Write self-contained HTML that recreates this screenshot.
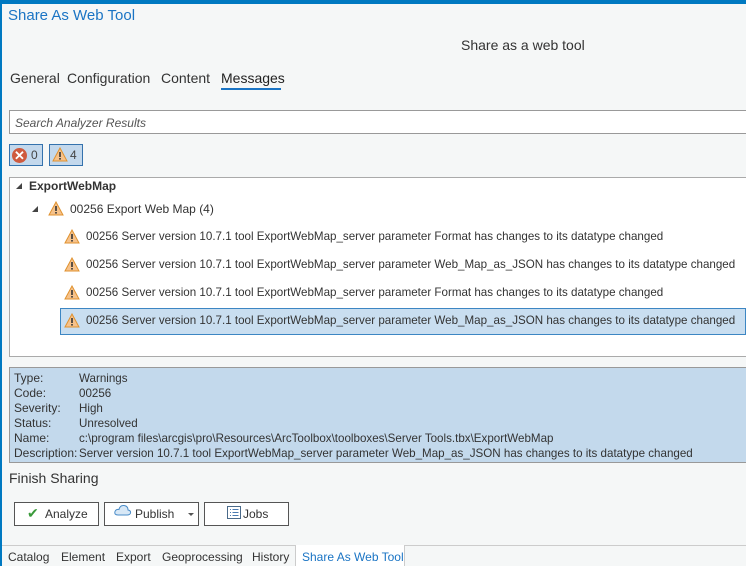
<!DOCTYPE html>
<html><head><style>
*{margin:0;padding:0;box-sizing:border-box}
body{width:746px;height:566px;background:#f5f7f7;font-family:"Liberation Sans",sans-serif;color:#333;position:relative;overflow:hidden;font-size:12px}
.a{position:absolute;white-space:nowrap}
.m{font-size:11.6px}
</style></head><body>
<div class="a" style="left:0;top:0;width:746px;height:4px;background:#0079c1"></div>
<div class="a" style="left:0;top:0;width:2px;height:566px;background:#0079c1"></div>
<div class="a" style="left:8px;top:7px;font-size:15px;color:#1a74c4">Share As Web Tool</div>
<div class="a" style="left:461px;top:37px;font-size:14px;color:#333">Share as a web tool</div>
<div class="a" style="left:10px;top:70px;font-size:14px;color:#333">General</div>
<div class="a" style="left:67px;top:70px;font-size:14px;color:#333">Configuration</div>
<div class="a" style="left:161px;top:70px;font-size:14px;color:#333">Content</div>
<div class="a" style="left:221px;top:70px;font-size:14px;color:#222">Messages</div>
<div class="a" style="left:221px;top:88px;width:60px;height:2px;background:#1a74c4"></div>
<div class="a" style="left:9px;top:110px;width:740px;height:24px;background:#fff;border:1px solid #999"></div>
<div class="a" style="left:15px;top:116px;font-size:12px;font-style:italic;color:#555">Search Analyzer Results</div>
<div class="a" style="left:9px;top:144px;width:34px;height:22px;background:#c3d8ec;border:1px solid #3472ad"></div>
<div class="a" style="left:12px;top:148px;width:15px;height:15px;border-radius:50%;background:#cf5a3e;color:#fff;font-size:13px;line-height:15px;text-align:center;font-weight:bold">✕</div>
<div class="a" style="left:31px;top:148px;color:#444">0</div>
<div class="a" style="left:49px;top:144px;width:34px;height:22px;background:#c3d8ec;border:1px solid #3472ad"></div>
<svg class="a" style="left:52px;top:147px" width="16" height="15"><path d="M8 1 L15 14 L1 14 Z" fill="#f6c28b" stroke="#e0922f"/><rect x="7.2" y="5" width="1.6" height="5" fill="#333"/><rect x="7.2" y="11" width="1.6" height="1.6" fill="#333"/></svg>
<div class="a" style="left:70px;top:148px;color:#444">4</div>
<div class="a" style="left:9px;top:177px;width:740px;height:180px;background:#fff;border:1px solid #aaa"></div>
<svg class="a" style="left:16px;top:183px" width="7" height="7"><path d="M6 0 L6 6 L0 6 Z" fill="#444"/></svg>
<div class="a" style="left:29px;top:179px;font-weight:bold;color:#333">ExportWebMap</div>
<svg class="a" style="left:32px;top:206px" width="7" height="7"><path d="M6 0 L6 6 L0 6 Z" fill="#444"/></svg>
<svg class="a" style="left:48px;top:201px" width="16" height="15"><path d="M8 1 L15 14 L1 14 Z" fill="#f6c28b" stroke="#e0922f"/><rect x="7.2" y="5" width="1.6" height="5" fill="#333"/><rect x="7.2" y="11" width="1.6" height="1.6" fill="#333"/></svg>
<div class="a" style="left:70px;top:202px">00256 Export Web Map (4)</div>
<div class="a" style="left:60px;top:308px;width:686px;height:27px;background:#c9def0;border:1px solid #3c86c3"></div>
<svg class="a" style="left:64px;top:229px" width="16" height="15"><path d="M8 1 L15 14 L1 14 Z" fill="#f6c28b" stroke="#e0922f"/><rect x="7.2" y="5" width="1.6" height="5" fill="#333"/><rect x="7.2" y="11" width="1.6" height="1.6" fill="#333"/></svg>
<div class="a m" style="left:86px;top:230px">00256 Server version 10.7.1 tool ExportWebMap_server parameter Format has changes to its datatype changed</div>
<svg class="a" style="left:64px;top:257px" width="16" height="15"><path d="M8 1 L15 14 L1 14 Z" fill="#f6c28b" stroke="#e0922f"/><rect x="7.2" y="5" width="1.6" height="5" fill="#333"/><rect x="7.2" y="11" width="1.6" height="1.6" fill="#333"/></svg>
<div class="a m" style="left:86px;top:258px">00256 Server version 10.7.1 tool ExportWebMap_server parameter Web_Map_as_JSON has changes to its datatype changed</div>
<svg class="a" style="left:64px;top:285px" width="16" height="15"><path d="M8 1 L15 14 L1 14 Z" fill="#f6c28b" stroke="#e0922f"/><rect x="7.2" y="5" width="1.6" height="5" fill="#333"/><rect x="7.2" y="11" width="1.6" height="1.6" fill="#333"/></svg>
<div class="a m" style="left:86px;top:286px">00256 Server version 10.7.1 tool ExportWebMap_server parameter Format has changes to its datatype changed</div>
<svg class="a" style="left:64px;top:313px" width="16" height="15"><path d="M8 1 L15 14 L1 14 Z" fill="#f6c28b" stroke="#e0922f"/><rect x="7.2" y="5" width="1.6" height="5" fill="#333"/><rect x="7.2" y="11" width="1.6" height="1.6" fill="#333"/></svg>
<div class="a m" style="left:86px;top:314px">00256 Server version 10.7.1 tool ExportWebMap_server parameter Web_Map_as_JSON has changes to its datatype changed</div>
<div class="a" style="left:9px;top:367px;width:740px;height:96px;background:#c3d9ec;border:1px solid #999"></div>
<div class="a" style="left:14px;top:371px;line-height:15px;color:#333">Type:<br>Code:<br>Severity:<br>Status:<br>Name:<br>Description:</div>
<div class="a m" style="left:79px;top:371px;line-height:15px;color:#333">Warnings<br>00256<br>High<br>Unresolved<br>c:\program files\arcgis\pro\Resources\ArcToolbox\toolboxes\Server Tools.tbx\ExportWebMap<br>Server version 10.7.1 tool ExportWebMap_server parameter Web_Map_as_JSON has changes to its datatype changed</div>
<div class="a" style="left:9px;top:470px;font-size:14px;color:#333">Finish Sharing</div>
<div class="a" style="left:14px;top:502px;width:85px;height:24px;background:#fff;border:1px solid #555"></div>
<div class="a" style="left:27px;top:506px;color:#3a9a3a;font-size:14px;line-height:14px">✔</div>
<div class="a" style="left:45px;top:507px;color:#333">Analyze</div>
<div class="a" style="left:104px;top:502px;width:95px;height:24px;background:#fff;border:1px solid #555"></div>
<svg class="a" style="left:114px;top:504px" width="18" height="12"><path d="M4 11 Q0 11 1 7.5 Q2 5 5 5.5 Q6 1 10 1.5 Q14 2 14 6 Q17 6.5 16.5 9 Q16 11 13 11 Z" fill="#d8e8f6" stroke="#4a8cc8"/></svg>
<div class="a" style="left:135px;top:507px;color:#333">Publish</div>
<div class="a" style="left:188px;top:513px;border-left:3px solid transparent;border-right:3px solid transparent;border-top:3px solid #555"></div>
<div class="a" style="left:204px;top:502px;width:85px;height:24px;background:#fff;border:1px solid #555"></div>
<svg class="a" style="left:227px;top:506px" width="14" height="13"><rect x="0.5" y="0.5" width="13" height="12" fill="none" stroke="#4a6a8a"/><path d="M3 3.5h1M5.5 3.5h6M3 6.5h1M5.5 6.5h6M3 9.5h1M5.5 9.5h6" stroke="#4a7ab0"/></svg>
<div class="a" style="left:243px;top:507px;color:#333">Jobs</div>
<div class="a" style="left:2px;top:545px;width:744px;height:1px;background:#ccc"></div>
<div class="a" style="left:295px;top:545px;width:110px;height:21px;background:#fff;border-left:1px solid #ccc;border-right:1px solid #ccc"></div>
<div class="a" style="left:8px;top:550px">Catalog</div>
<div class="a" style="left:61px;top:550px">Element</div>
<div class="a" style="left:116px;top:550px">Export</div>
<div class="a" style="left:162px;top:550px">Geoprocessing</div>
<div class="a" style="left:252px;top:550px">History</div>
<div class="a" style="left:302px;top:550px;color:#1a74c4">Share As Web Tool</div>
</body></html>
